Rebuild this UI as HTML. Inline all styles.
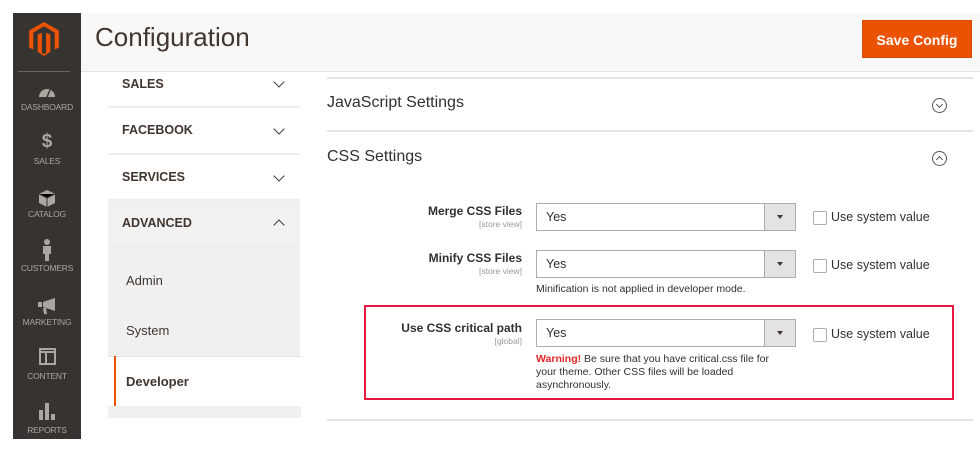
<!DOCTYPE html>
<html><head><meta charset="utf-8"><style>
*{margin:0;padding:0;box-sizing:border-box}
body{width:980px;height:451px;background:#fff;position:relative;overflow:hidden;font-family:"Liberation Sans",sans-serif;color:#303030}
.abs{position:absolute}
#side{left:13px;top:13px;width:68px;height:426px;background:#373330}
.lbl{position:absolute;left:0;width:68px;text-align:center;font-size:8.5px;color:#aaa6a0;letter-spacing:-0.2px}
.ic{position:absolute;left:0;width:68px;text-align:center;color:#aaa6a0}
#head{left:81px;top:13px;width:899px;height:59px;background:#f8f8f8;border-bottom:1px solid #e3e3e3}
.nav{position:absolute;left:108px;width:192px;background:#fff;border-bottom:2px solid #eee;font-weight:bold;font-size:12.5px;color:#41362f;padding-left:14px}
.chev{position:absolute;right:17px;width:8px;height:8px;border-right:1.6px solid #41362f;border-bottom:1.6px solid #41362f;transform:rotate(45deg)}
.sub{position:absolute;left:108px;width:192px;background:#f0f0f0;font-size:13px;color:#41362f;padding-left:18px}
.hr{position:absolute;left:327px;width:646px;height:2px;background:#e3e3e3}
.sec{position:absolute;left:327px;font-size:16px;color:#303030}
.circ{position:absolute;left:932px;width:15px;height:15px;border:1px solid #555;border-radius:50%}
.circ i{position:absolute;left:4px;width:5px;height:5px;border-right:1px solid #555;border-bottom:1px solid #555}
.fl{position:absolute;right:458px;text-align:right;font-size:12px;font-weight:bold;color:#303030;line-height:13px}
.fl small{display:block;font-weight:normal;font-size:8.5px;color:#999}
.sel{position:absolute;left:536px;width:260px;height:28px;border:1px solid #adadad;background:#fff;font-size:12.5px;padding:6px 9px}
.sel b{position:absolute;right:0;top:0;width:31px;height:26px;background:#e3e3e3;border-left:1px solid #adadad}
.sel b:after{content:"";position:absolute;left:12px;top:11px;border:3.5px solid transparent;border-top:4px solid #41362f}
.cb{position:absolute;left:813px;width:14px;height:14px;border:1px solid #adadad;border-radius:2px;background:#fff}
.usv{position:absolute;left:831px;font-size:12.5px;color:#303030}
.note{position:absolute;left:536px;font-size:10.5px;color:#303030;line-height:13px}
</style></head><body>
<div id="side" class="abs">
 <svg class="abs" style="left:15px;top:9px" width="32" height="34" viewBox="0 0 30 32"><path d="M15 0L29 8V24L25 26V10L15 4L5 10V26L1 24V8Z M9 12L13 10V29L15 30L17 29V10L21 12V28L15 32L9 28Z" fill="#eb5202"/></svg>
 <div class="abs" style="left:5px;top:58px;width:52px;height:1px;background:#6b6560"></div>
 <svg class="abs" style="left:25px;top:73px" width="18" height="12"><path d="M1 11A8 8 0 0 1 17 11Z" fill="#aaa6a0"/><path d="M9 11L12 4" stroke="#373330" stroke-width="1.5"/></svg>
 <div class="lbl" style="top:89px">DASHBOARD</div>
 <div class="ic" style="top:118px;font-size:19px;font-weight:bold">$</div>
 <div class="lbl" style="top:143px">SALES</div>
 <svg class="abs" style="left:26px;top:177px" width="16" height="17"><path d="M8 0L16 4V13L8 17L0 13V4Z" fill="#aaa6a0"/><path d="M0 4L8 8L16 4M8 8V17" stroke="#373330" stroke-width="1"/></svg>
 <div class="lbl" style="top:196px">CATALOG</div>
 <svg class="abs" style="left:28px;top:226px" width="12" height="22"><circle cx="6" cy="3" r="3" fill="#aaa6a0"/><path d="M2 7H10V15H8V22H4V15H2Z" fill="#aaa6a0"/></svg>
 <div class="lbl" style="top:250px">CUSTOMERS</div>
 <svg class="abs" style="left:25px;top:285px" width="18" height="16"><path d="M0 4H4V9H0Z M5 4L17 0V13L5 9Z M5 10H8L9 16H6Z" fill="#aaa6a0"/></svg>
 <div class="lbl" style="top:304px">MARKETING</div>
 <svg class="abs" style="left:26px;top:335px" width="17" height="17"><path d="M0 0H17V17H0Z M2 5V15H6V5Z M8 5V15H15V5Z M2 2V3H15V2Z" fill="#aaa6a0" fill-rule="evenodd"/></svg>
 <div class="lbl" style="top:358px">CONTENT</div>
 <svg class="abs" style="left:26px;top:390px" width="17" height="17"><path d="M0 7H4V17H0Z M6 0H10V17H6Z M12 11H16V17H12Z" fill="#aaa6a0"/></svg>
 <div class="lbl" style="top:412px">REPORTS</div>
</div>
<div id="head" class="abs"></div>
<div class="abs" style="left:95px;top:22px;font-size:26px;color:#41362f">Configuration</div>
<div class="abs" style="left:862px;top:20px;width:110px;height:38px;background:#eb5202;color:#fff;font-size:14px;font-weight:bold;text-align:center;line-height:38px;border:1px solid #d84a00">Save Config</div>

<div class="nav" style="top:72px;height:36px;line-height:24px">SALES<span class="chev" style="top:6px"></span></div>
<div class="nav" style="top:108px;height:47px;line-height:45px">FACEBOOK<span class="chev" style="top:17px"></span></div>
<div class="nav" style="top:155px;height:46px;line-height:44px">SERVICES<span class="chev" style="top:17px"></span></div>
<div class="nav" style="top:201px;height:47px;line-height:45px;background:#f1f1f1">ADVANCED<span class="chev" style="top:20px;transform:rotate(225deg)"></span></div>
<div class="sub" style="top:248px;height:108px"><div style="position:absolute;top:25px;left:18px">Admin</div><div style="position:absolute;top:75px;left:18px">System</div></div>
<div class="abs" style="left:108px;top:356px;width:193px;height:50px;background:#fff;border-top:1px solid #e3e3e3"></div>
<div class="abs" style="left:114px;top:356px;width:2px;height:50px;background:#eb5202"></div>
<div class="abs" style="left:126px;top:374px;font-size:13px;font-weight:bold;color:#41362f">Developer</div>
<div class="abs" style="left:108px;top:406px;width:193px;height:12px;background:#f0f0f0"></div>

<div class="hr" style="top:77px"></div>
<div class="sec" style="top:94px">JavaScript Settings</div>
<div class="circ" style="top:98px"><i style="top:3px;transform:rotate(45deg)"></i></div>
<div class="hr" style="top:130px"></div>
<div class="sec" style="top:148px">CSS Settings</div>
<div class="circ" style="top:151px"><i style="top:5px;transform:rotate(225deg)"></i></div>

<div class="fl" style="top:205px">Merge CSS Files<small>[store view]</small></div>
<div class="sel" style="top:203px">Yes<b></b></div>
<div class="cb" style="top:211px"></div><div class="usv" style="top:210px">Use system value</div>

<div class="fl" style="top:252px">Minify CSS Files<small>[store view]</small></div>
<div class="sel" style="top:250px">Yes<b></b></div>
<div class="cb" style="top:259px"></div><div class="usv" style="top:258px">Use system value</div>
<div class="note" style="top:283px">Minification is not applied in developer mode.</div>

<div class="abs" style="left:364px;top:305px;width:590px;height:95px;border:2px solid #e8173f"></div>
<div class="fl" style="top:322px">Use CSS critical path<small>[global]</small></div>
<div class="sel" style="top:319px">Yes<b></b></div>
<div class="cb" style="top:328px"></div><div class="usv" style="top:327px">Use system value</div>
<div class="note" style="top:353px"><span style="color:#e22626;font-weight:bold">Warning!</span> Be sure that you have critical.css file for<br>your theme. Other CSS files will be loaded<br>asynchronously.</div>

<div class="hr" style="top:419px"></div>
</body></html>
